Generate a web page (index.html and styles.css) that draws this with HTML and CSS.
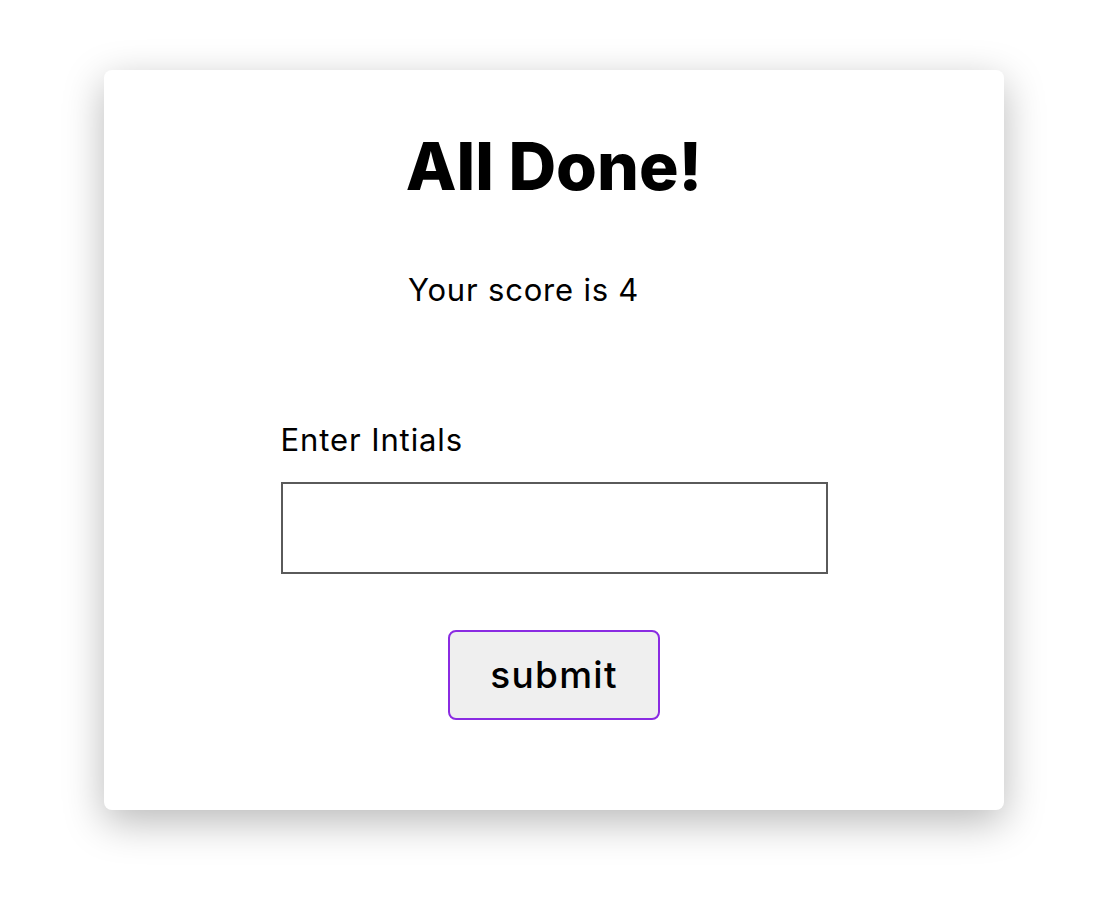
FILE: index.html
```html
<!DOCTYPE html>
<html>
  <head>
    <link rel="stylesheet" href="styles.css">
  </head>
  <body>
    <div class="page">
      <div class="card">
        <h1 class="title">All Done!</h1>
        <p class="score">Your score is 4</p>
        <div class="initials">
          <label for="initials-input">Enter Intials</label>
          <input type="text" id="initials-input">
        </div>
        <button class="submit">submit</button>
      </div>
    </div>
  </body>
</html>
```

FILE: styles.css
```css
body {
  margin: 0;
  background: #fff;
  font-family: Inter, "Noto Sans", sans-serif;
  color: #000;
}
.page {
  padding: 70px 0 102px 104px;
}
.card {
  width: 900px;
  height: 740px;
  box-sizing: border-box;
  background: #fff;
  border-radius: 8px;
  box-shadow: 0 12px 40px rgba(0, 0, 0, 0.28);
  display: flex;
  flex-direction: column;
  align-items: center;
  padding-top: 57px;
}
.title {
  margin: 0;
  font-size: 66px;
  font-weight: 800;
  line-height: 1.2;
}
.score {
  align-self: flex-start;
  margin: 64px 0 0 304px;
  font-size: 31px;
  font-weight: 400;
  line-height: 1.3;
  letter-spacing: 0.8px;
}
.initials {
  margin-top: 110px;
  width: 547px;
  display: flex;
  flex-direction: column;
}
.initials label {
  font-size: 31px;
  line-height: 1.3;
  letter-spacing: 0.9px;
}
.initials input {
  margin-top: 21px;
  height: 92px;
  box-sizing: border-box;
  border: 2px solid #5a5a5a;
  border-radius: 0;
  font-size: 28px;
  padding: 0 12px;
  outline: 0;
}
.submit {
  margin-top: 56px;
  width: 212px;
  height: 90px;
  box-sizing: border-box;
  border: 2px solid #8a2be2;
  border-radius: 8px;
  background: #efefef;
  font-family: inherit;
  font-size: 37px;
  font-weight: 500;
  letter-spacing: 1.3px;
  color: #000;
}
```
